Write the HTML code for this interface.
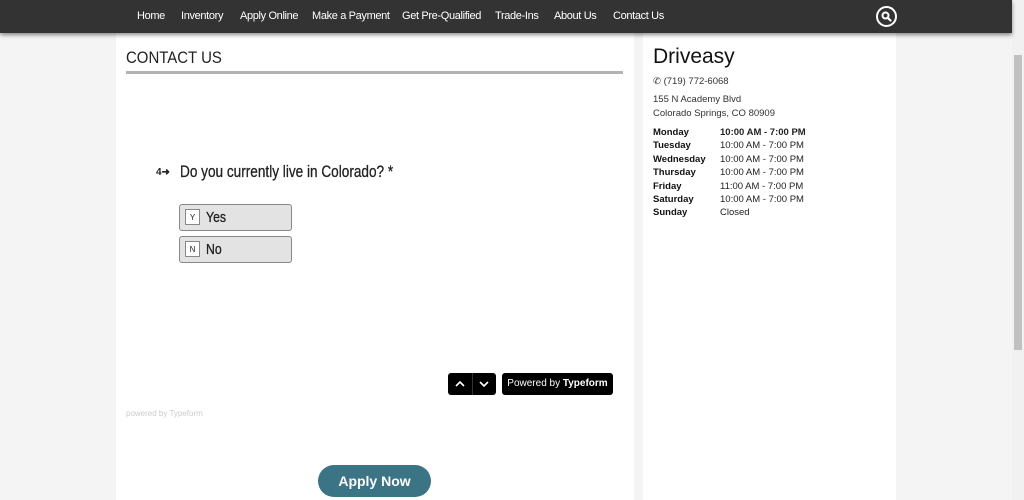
<!DOCTYPE html>
<html><head><meta charset="utf-8"><style>
*{box-sizing:border-box;margin:0;padding:0}
body{width:1024px;height:500px;overflow:hidden;background:#f4f4f4;font-family:"Liberation Sans",Arial,sans-serif;position:relative}
.nav{position:absolute;left:0;top:0;width:1012px;height:33px;background:#333;box-shadow:0 2px 4px rgba(0,0,0,.45);z-index:2}
.nav a{position:absolute;top:10px;color:#fff;font-size:11px;text-decoration:none;white-space:nowrap;letter-spacing:-.35px}
.search{position:absolute;left:876px;top:6px;width:21px;height:21px;border:2px solid #fff;border-radius:50%}
.main{position:absolute;left:116px;top:33px;width:518px;height:467px;background:#fff}
.side{position:absolute;left:643px;top:33px;width:253px;height:467px;background:#fff}
h1{position:absolute;left:10px;top:15px;font-weight:normal;font-size:17px;color:#222;transform:scaleX(.88);transform-origin:left;white-space:nowrap}
.rule{position:absolute;left:10px;top:38px;width:497px;height:3px;background:#b3b3b3}
.num{position:absolute;left:40px;top:134px;font-size:10px;color:#222;font-weight:bold}
.q{position:absolute;left:64px;top:129px;font-size:17px;color:#222;transform:scaleX(.8);transform-origin:left;white-space:nowrap;-webkit-text-stroke:.3px #222}
.opt{position:absolute;left:63px;width:113px;height:27px;background:#e3e3e3;border:1px solid #888;border-radius:3px;font-size:15px;color:#222}
.opt b{position:absolute;left:5px;top:4px;width:15px;height:16px;background:#fff;border:1px solid #888;font-size:8px;text-align:center;line-height:15px;font-weight:normal}
.opt span{position:absolute;left:26px;top:4px;transform:scaleX(.82);transform-origin:left;-webkit-text-stroke:.3px #222}
.arr{position:absolute;top:340px;width:24px;height:22px;background:#000;border-radius:3px}
.pw{position:absolute;left:386px;top:340px;width:111px;height:22px;background:#000;border-radius:3px;color:#fff;font-size:10px;line-height:22px;text-align:center}
.pby{position:absolute;left:10px;top:376px;font-size:8px;color:#ccc}
.apply{position:absolute;left:202px;top:432px;width:113px;height:32px;border-radius:16px;background:#3b7585;color:#fff;font-weight:bold;font-size:14px;text-align:center;line-height:32px}
.side h2{position:absolute;left:10px;top:12px;font-weight:normal;font-size:21px;color:#111}
.side .t{position:absolute;left:10px;font-size:9.5px;color:#333}
table{position:absolute;left:10px;top:93px;border-collapse:collapse;font-size:9.5px;color:#222}
td{height:13.4px;padding:0;line-height:13.4px}
td:first-child{width:67px;font-weight:bold;color:#111}
.sb{position:absolute;left:1012px;top:0;width:12px;height:500px;background:#f1f1f1}
.th{position:absolute;left:1014px;top:55px;width:8px;height:295px;background:#c1c1c1}
</style></head><body>
<div class="nav">
<a style="left:137px">Home</a><a style="left:181px">Inventory</a><a style="left:240px">Apply Online</a><a style="left:312px">Make a Payment</a><a style="left:402px">Get Pre-Qualified</a><a style="left:495px">Trade-Ins</a><a style="left:554px">About Us</a><a style="left:613px">Contact Us</a>
<div class="search"><svg width="17" height="17" viewBox="0 0 17 17" style="position:absolute;left:0;top:0"><circle cx="7.5" cy="7.5" r="3" fill="none" stroke="#fff" stroke-width="2"/><path d="M9.7 9.7L12.5 12.5" stroke="#fff" stroke-width="2.2" stroke-linecap="round"/></svg></div>
</div>
<div class="main">
<h1>CONTACT US</h1><div class="rule"></div>
<div class="num">4&#10140;</div>
<div class="q">Do you currently live in Colorado? *</div>
<div class="opt" style="top:171px"><b>Y</b><span>Yes</span></div>
<div class="opt" style="top:203px"><b>N</b><span>No</span></div>
<div class="arr" style="left:332px;border-radius:3px 0 0 3px"><svg width="24" height="22"><path d="M8 13l4-4 4 4" fill="none" stroke="#fff" stroke-width="1.6"/></svg></div>
<div class="arr" style="left:356px;border-radius:0 3px 3px 0;border-left:1px solid #333"><svg width="24" height="22"><path d="M7 9l4 4 4-4" fill="none" stroke="#fff" stroke-width="1.6"/></svg></div>
<div class="pw">Powered by <b>Typeform</b></div>
<div class="pby">powered by Typeform</div>
<div class="apply">Apply Now</div>
</div>
<div class="side">
<h2>Driveasy</h2>
<div class="t" style="top:43px">&#9990; (719) 772-6068</div>
<div class="t" style="top:60px;line-height:13.5px">155 N Academy Blvd<br>Colorado Springs, CO 80909</div>
<table>
<tr><td>Monday</td><td><b>10:00 AM - 7:00 PM</b></td></tr>
<tr><td>Tuesday</td><td>10:00 AM - 7:00 PM</td></tr>
<tr><td>Wednesday</td><td>10:00 AM - 7:00 PM</td></tr>
<tr><td>Thursday</td><td>10:00 AM - 7:00 PM</td></tr>
<tr><td>Friday</td><td>11:00 AM - 7:00 PM</td></tr>
<tr><td>Saturday</td><td>10:00 AM - 7:00 PM</td></tr>
<tr><td>Sunday</td><td>Closed</td></tr>
</table>
</div>
<div class="sb"></div><div class="th"></div>
</body></html>
